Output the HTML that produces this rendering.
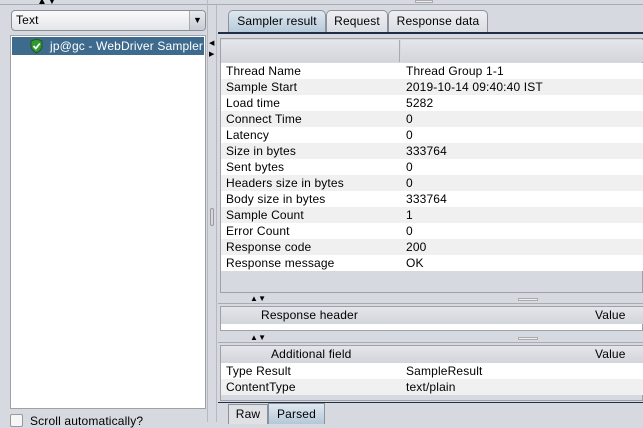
<!DOCTYPE html>
<html><head><style>
*{margin:0;padding:0;box-sizing:border-box}
body{width:643px;height:422px;overflow:hidden;background:#d6d9df;font-family:"Liberation Sans",sans-serif;font-size:12px;color:#000;position:relative;letter-spacing:0.15px}
.a{position:absolute}
.row{position:absolute;left:221px;width:422px;height:16px;line-height:16px}
.row span{position:absolute;left:5px}
.row b{font-weight:normal;position:absolute;left:185px}
.tab{position:absolute;top:10px;height:23px;line-height:21px;border:1px solid #8d929a;border-bottom:none;border-radius:5px 5px 0 0;text-align:center;background:linear-gradient(#eef0f3,#d9dce2)}
.sel{background:linear-gradient(#dfe8f0,#b4c8d8)}
.hdr{position:absolute;height:17px;line-height:17px;background:linear-gradient(#e4e6ea,#d2d5db)}
</style></head><body>
<div class="a" style="left:0;top:4px;width:643px;height:1px;background:#a8acb3"></div>
<div class="a" style="left:37px;top:-4px;font-size:10px">▲▼</div>
<div class="a" style="left:415px;top:0;width:18px;height:3px;background:#eee;border:1px solid #aaa"></div>
<div class="a" style="left:11px;top:10px;width:195px;height:21px;border:1px solid #8a8f96;border-radius:4px;background:linear-gradient(#fbfbfc,#e3e5e9);line-height:19px;padding-left:4px">Text</div>
<div class="a" style="left:189px;top:11px;width:16px;height:19px;border-left:1px solid #aaa;background:linear-gradient(#e8eaee,#c8ccd3);border-radius:0 3px 3px 0;font-size:9px;text-align:center;line-height:19px">▼</div>
<div class="a" style="left:10px;top:35px;width:196px;height:374px;background:#fff;border:1px solid #9ea2a8"></div>
<div class="a" style="left:12px;top:37px;width:192px;height:18px;background:#3e6a8e;color:#fff;line-height:18px;padding-left:38px">jp@gc - WebDriver Sampler</div>
<svg class="a" style="left:29px;top:38px" width="15" height="16" viewBox="0 0 15 16"><path d="M7.5 1 L13 3 L13 8 Q13 12 7.5 15 Q2 12 2 8 L2 3Z" fill="#2f9a2f" stroke="#1d5a1d"/><path d="M4.5 8 L6.8 10.5 L10.8 5.5" stroke="#fff" stroke-width="1.8" fill="none"/></svg>
<div class="a" style="left:10px;top:414px;width:13px;height:13px;border:1px solid #999;border-radius:2px;background:#f6f6f6"></div>
<div class="a" style="left:30px;top:414px">Scroll automatically?</div>
<div class="a" style="left:207px;top:0;width:1px;height:422px;background:#b6b9bf"></div>
<div class="a" style="left:216px;top:5px;width:1px;height:417px;background:#b6b9bf"></div>
<div class="a" style="left:209px;top:38px;font-size:7px;line-height:11px">◀<br>▶</div>
<div class="a" style="left:210px;top:208px;width:4px;height:18px;border:1px solid #999;border-radius:2px"></div>
<div class="tab sel" style="left:228px;width:98px">Sampler result</div>
<div class="tab" style="left:326px;width:62px">Request</div>
<div class="tab" style="left:388px;width:100px">Response data</div>
<div class="a" style="left:218px;top:32px;width:425px;height:2px;background:#1f2f45"></div>
<div class="a" style="left:220px;top:38px;width:423px;height:255px;border:1px solid #9ea2a8;background:#d6d9df"></div>
<div class="hdr" style="left:221px;top:40px;width:179px;height:22px;border-right:1px solid #aaa"></div>
<div class="hdr" style="left:401px;top:40px;width:242px;height:22px"></div>
<div class="row" style="top:63px;background:#fff"><span>Thread Name</span><b>Thread Group 1-1</b></div>
<div class="row" style="top:79px;background:#f0f0f0"><span>Sample Start</span><b>2019-10-14 09:40:40 IST</b></div>
<div class="row" style="top:95px;background:#fff"><span>Load time</span><b>5282</b></div>
<div class="row" style="top:111px;background:#f0f0f0"><span>Connect Time</span><b>0</b></div>
<div class="row" style="top:127px;background:#fff"><span>Latency</span><b>0</b></div>
<div class="row" style="top:143px;background:#f0f0f0"><span>Size in bytes</span><b>333764</b></div>
<div class="row" style="top:159px;background:#fff"><span>Sent bytes</span><b>0</b></div>
<div class="row" style="top:175px;background:#f0f0f0"><span>Headers size in bytes</span><b>0</b></div>
<div class="row" style="top:191px;background:#fff"><span>Body size in bytes</span><b>333764</b></div>
<div class="row" style="top:207px;background:#f0f0f0"><span>Sample Count</span><b>1</b></div>
<div class="row" style="top:223px;background:#fff"><span>Error Count</span><b>0</b></div>
<div class="row" style="top:239px;background:#f0f0f0"><span>Response code</span><b>200</b></div>
<div class="row" style="top:255px;background:#fff"><span>Response message</span><b>OK</b></div>
<div class="a" style="left:250px;top:294px;font-size:8px">▲▼</div>
<div class="a" style="left:518px;top:298px;width:20px;height:3px;border:1px solid #aaa;background:#eee"></div>
<div class="a" style="left:218px;top:303px;width:425px;height:1px;background:#a8acb3"></div>
<div class="a" style="left:220px;top:306px;width:423px;height:25px;border:1px solid #9ea2a8;background:#fff"></div>
<div class="hdr" style="left:221px;top:307px;width:422px"><span class="a" style="left:40px">Response header</span><span class="a" style="left:374px">Value</span></div>
<div class="a" style="left:250px;top:333px;font-size:8px">▲▼</div>
<div class="a" style="left:518px;top:337px;width:20px;height:3px;border:1px solid #aaa;background:#eee"></div>
<div class="a" style="left:218px;top:342px;width:425px;height:1px;background:#a8acb3"></div>
<div class="a" style="left:220px;top:345px;width:423px;height:56px;border:1px solid #9ea2a8;background:#d6d9df"></div>
<div class="hdr" style="left:221px;top:346px;width:422px"><span class="a" style="left:50px">Additional field</span><span class="a" style="left:374px">Value</span></div>
<div class="row" style="top:363px;background:#fff"><span>Type Result</span><b>SampleResult</b></div>
<div class="row" style="top:379px;background:#f0f0f0"><span>ContentType</span><b>text/plain</b></div>
<div class="a" style="left:218px;top:402px;width:425px;height:1px;background:#1f2f45"></div>
<div class="a" style="left:228px;top:404px;width:40px;height:20px;border:1px solid #8d929a;border-bottom:none;line-height:19px;text-align:center;background:#dfe1e5">Raw</div>
<div class="a" style="left:268px;top:403px;width:57px;height:21px;border:1px solid #8d929a;border-bottom:none;line-height:21px;text-align:center;background:linear-gradient(#dfe8f0,#b4c8d8)">Parsed</div>
</body></html>
